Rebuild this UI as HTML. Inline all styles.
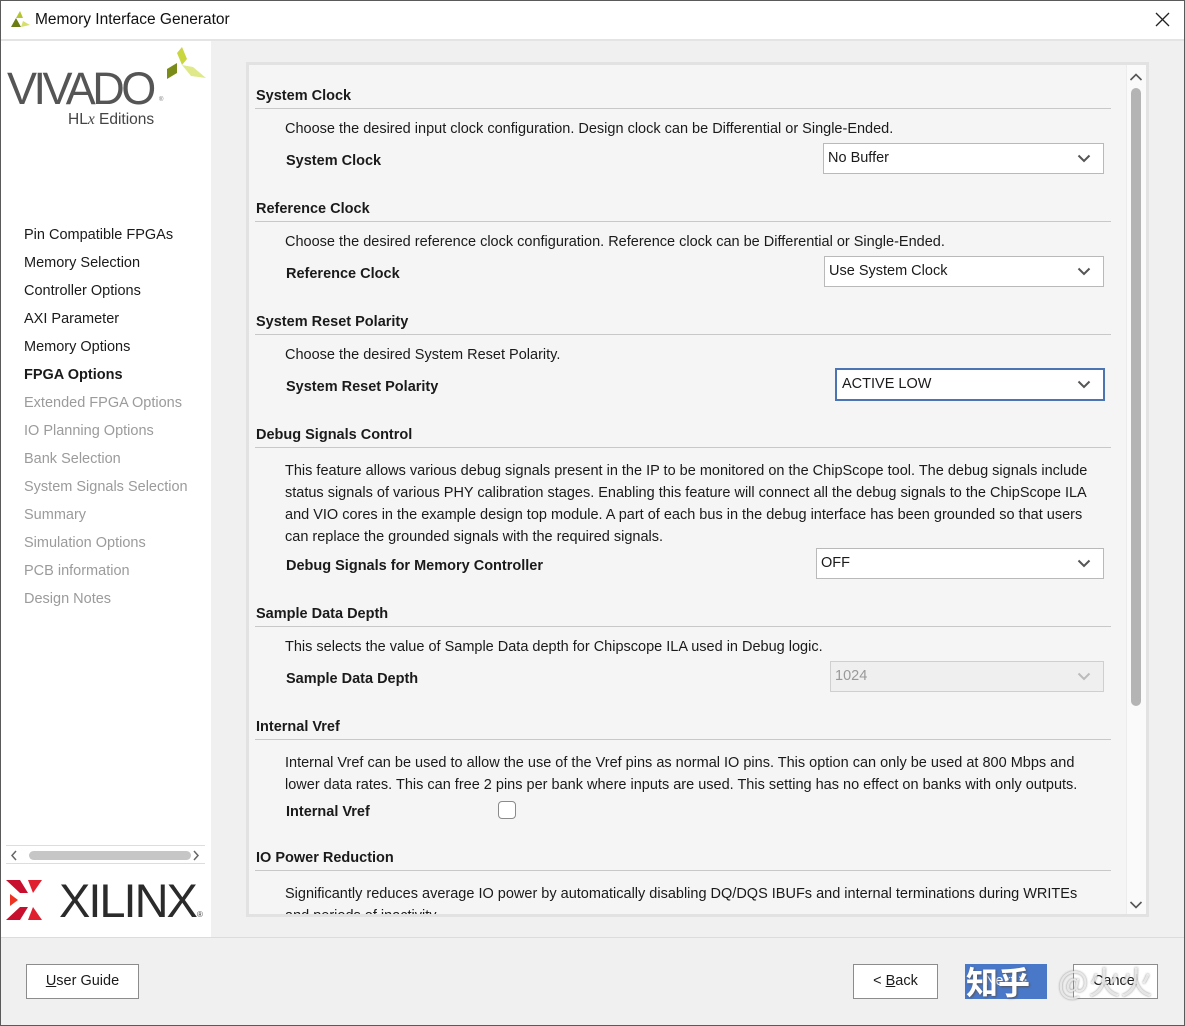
<!DOCTYPE html>
<html><head><meta charset="utf-8"><style>
*{margin:0;padding:0;box-sizing:border-box}
body{width:1185px;height:1026px;position:relative;overflow:hidden;background:#f0f0f0;font-family:"Liberation Sans",Arial,sans-serif;font-size:14.5px;color:#1a1a1a}
.a{position:absolute;white-space:nowrap}
.h{font-weight:bold;font-size:14.5px}
.rule{position:absolute;left:255px;width:856px;height:1px;background:#c8c8c8}
.dd{position:absolute;background:#fff;border:1px solid #b9b9b9;height:31px;padding-left:4px;line-height:29px;font-size:14.5px}
.dd svg{position:absolute;right:12px;top:10px}
.nav{position:absolute;left:24px;font-size:14.5px}
.dis{color:#9b9b9b}
.btn{position:absolute;height:35px;border:1px solid #8c8c8c;background:#fff;text-align:center;line-height:33px;font-size:14.5px}
</style></head><body>
<div class="a" style="left:0;top:0;width:1185px;height:1026px;border:1px solid #5a5a5a"></div>
<div class="a" style="left:1px;top:1px;width:1183px;height:38px;background:#fff"></div>
<svg class="a" style="left:9px;top:9px" width="22" height="20"><polygon points="2,18 7,9 12,18" fill="#6b7d12"/><polygon points="7,9 11,2 14,9" fill="#b5c531"/><polygon points="12,18 14,12 21,16" fill="#d7e06a"/></svg>
<div class="a" style="left:35px;top:11px;font-size:15.5px;color:#111">Memory Interface Generator</div>
<svg class="a" style="left:1155px;top:12px" width="15" height="15"><path d="M1 1L14 14M14 1L1 14" stroke="#222" stroke-width="1.3"/></svg>
<div class="a" style="left:1px;top:39px;width:1183px;height:2px;background:#e4e4e4"></div>
<div class="a" style="left:1px;top:41px;width:210px;height:896px;background:#fff"></div>
<div class="a" style="left:7px;top:64px;font-size:45px;color:#555;letter-spacing:-3.5px;line-height:50px">VIVADO</div>
<div class="a" style="left:159px;top:97px;font-size:6px;color:#777">®</div>
<div class="a" style="left:68px;top:111px;font-size:15.5px;color:#444">HL<i style="font-family:'Liberation Serif',serif">x</i> Editions</div>
<svg class="a" style="left:163px;top:45px" width="44" height="40"><polygon points="14,8 19,2 24,14 19,20" fill="#c9d640"/><polygon points="4,24 14,18 14,28 4,34" fill="#7b8c18"/><polygon points="19,20 30,22 43,33 28,31" fill="#e0e98a"/></svg>
<div class="nav" style="top:227px">Pin Compatible FPGAs</div>
<div class="nav" style="top:255px">Memory Selection</div>
<div class="nav" style="top:283px">Controller Options</div>
<div class="nav" style="top:311px">AXI Parameter</div>
<div class="nav" style="top:339px">Memory Options</div>
<div class="nav" style="top:367px;font-weight:bold">FPGA Options</div>
<div class="nav dis" style="top:395px">Extended FPGA Options</div>
<div class="nav dis" style="top:423px">IO Planning Options</div>
<div class="nav dis" style="top:451px">Bank Selection</div>
<div class="nav dis" style="top:479px">System Signals Selection</div>
<div class="nav dis" style="top:507px">Summary</div>
<div class="nav dis" style="top:535px">Simulation Options</div>
<div class="nav dis" style="top:563px">PCB information</div>
<div class="nav dis" style="top:591px">Design Notes</div>
<div class="a" style="left:6px;top:845px;width:199px;height:1px;background:#ddd"></div>
<div class="a" style="left:6px;top:863px;width:199px;height:1px;background:#ddd"></div>
<svg class="a" style="left:10px;top:849px" width="196" height="13"><path d="M6 2L2 6.5L6 11" stroke="#666" stroke-width="1.5" fill="none"/><rect x="19" y="2" width="162" height="9" rx="4.5" fill="#c6c6c6"/><path d="M184 2L188 6.5L184 11" stroke="#666" stroke-width="1.5" fill="none"/></svg>
<svg class="a" style="left:6px;top:880px" width="38" height="40"><polygon points="0,0 14,0 22,13 14,13" fill="#c8102e"/><polygon points="0,40 14,40 22,27 14,27" fill="#c8102e"/><polygon points="4,14 12,20 4,26" fill="#e32"/><polygon points="22,0 36,0 27,13" fill="#e0202f"/><polygon points="22,40 36,40 27,27" fill="#e0202f"/></svg>
<div class="a" style="left:59px;top:874px;font-size:47px;color:#2b2b2b;line-height:54px;letter-spacing:-2px">XILINX</div>
<div class="a" style="left:197px;top:910px;font-size:8px;color:#444">®</div>
<div class="a" style="left:246px;top:62px;width:903px;height:855px;border:3px solid #e2e2e2;background:#f5f5f5"></div>
<div class="a" style="left:1126px;top:65px;width:20px;height:849px;background:#fafafa;border-left:1px solid #ececec"></div>
<svg class="a" style="left:1129px;top:72px" width="14" height="10"><path d="M1.5 8L7 2.5L12.5 8" stroke="#555" stroke-width="1.6" fill="none"/></svg>
<div class="a" style="left:1131px;top:88px;width:10px;height:618px;background:#b4b4b4;border-radius:5px"></div>
<svg class="a" style="left:1129px;top:900px" width="14" height="10"><path d="M1.5 2L7 7.5L12.5 2" stroke="#555" stroke-width="1.6" fill="none"/></svg>

<div class="a h" style="left:256px;top:88px">System Clock</div><div class="rule" style="top:108px"></div>
<div class="a" style="left:285px;top:121px">Choose the desired input clock configuration. Design clock can be Differential or Single-Ended.</div>
<div class="a h" style="left:286px;top:153px">System Clock</div>
<div class="dd" style="left:823px;top:143px;width:281px">No Buffer<svg width="14" height="9"><path d="M1.5 1.5L7 7L12.5 1.5" stroke="#555" stroke-width="2" fill="none"/></svg></div>

<div class="a h" style="left:256px;top:201px">Reference Clock</div><div class="rule" style="top:221px"></div>
<div class="a" style="left:285px;top:234px">Choose the desired reference clock configuration. Reference clock can be Differential or Single-Ended.</div>
<div class="a h" style="left:286px;top:266px">Reference Clock</div>
<div class="dd" style="left:824px;top:256px;width:280px">Use System Clock<svg width="14" height="9"><path d="M1.5 1.5L7 7L12.5 1.5" stroke="#555" stroke-width="2" fill="none"/></svg></div>

<div class="a h" style="left:256px;top:314px">System Reset Polarity</div><div class="rule" style="top:334px"></div>
<div class="a" style="left:285px;top:347px">Choose the desired System Reset Polarity.</div>
<div class="a h" style="left:286px;top:379px">System Reset Polarity</div>
<div class="dd" style="left:835px;top:368px;width:270px;height:33px;border:2px solid #4a74b4;padding-left:5px">ACTIVE LOW<svg width="14" height="9"><path d="M1.5 1.5L7 7L12.5 1.5" stroke="#555" stroke-width="2" fill="none"/></svg></div>

<div class="a h" style="left:256px;top:427px">Debug Signals Control</div><div class="rule" style="top:447px"></div>
<div class="a" style="left:285px;top:460px;line-height:22px">This feature allows various debug signals present in the IP to be monitored on the ChipScope tool. The debug signals include<br>status signals of various PHY calibration stages. Enabling this feature will connect all the debug signals to the ChipScope ILA<br>and VIO cores in the example design top module. A part of each bus in the debug interface has been grounded so that users<br>can replace the grounded signals with the required signals.</div>
<div class="a h" style="left:286px;top:558px">Debug Signals for Memory Controller</div>
<div class="dd" style="left:816px;top:548px;width:288px">OFF<svg width="14" height="9"><path d="M1.5 1.5L7 7L12.5 1.5" stroke="#555" stroke-width="2" fill="none"/></svg></div>

<div class="a h" style="left:256px;top:606px">Sample Data Depth</div><div class="rule" style="top:626px"></div>
<div class="a" style="left:285px;top:639px">This selects the value of Sample Data depth for Chipscope ILA used in Debug logic.</div>
<div class="a h" style="left:286px;top:671px">Sample Data Depth</div>
<div class="dd" style="left:830px;top:661px;width:274px;background:#efefef;color:#999;border-color:#cfcfcf">1024<svg width="14" height="9"><path d="M1.5 1.5L7 7L12.5 1.5" stroke="#bbb" stroke-width="2" fill="none"/></svg></div>

<div class="a h" style="left:256px;top:719px">Internal Vref</div><div class="rule" style="top:739px"></div>
<div class="a" style="left:285px;top:752px;line-height:22px">Internal Vref can be used to allow the use of the Vref pins as normal IO pins. This option can only be used at 800 Mbps and<br>lower data rates. This can free 2 pins per bank where inputs are used. This setting has no effect on banks with only outputs.</div>
<div class="a h" style="left:286px;top:804px">Internal Vref</div>
<div class="a" style="left:498px;top:801px;width:18px;height:18px;border:1.5px solid #8a8a8a;border-radius:4px;background:#fff"></div>

<div class="a h" style="left:256px;top:850px">IO Power Reduction</div><div class="rule" style="top:870px"></div>
<div class="a" style="left:0;top:0;width:1185px;height:914px;overflow:hidden"><div class="a" style="left:285px;top:883px;line-height:22px">Significantly reduces average IO power by automatically disabling DQ/DQS IBUFs and internal terminations during WRITEs<br>and periods of inactivity.</div></div>

<div class="a" style="left:1px;top:937px;width:1183px;height:1px;background:#dcdcdc"></div>
<div class="btn" style="left:26px;top:964px;width:113px"><u>U</u>ser Guide</div>
<div class="btn" style="left:853px;top:964px;width:85px">&lt; <u>B</u>ack</div>
<div class="btn" style="left:965px;top:964px;width:82px;background:#4a78c8;border-color:#4a78c8;color:#fff">Next &gt;</div>
<div class="a" style="left:966px;top:958px;font-family:'Noto Sans CJK SC',sans-serif;font-size:32px;color:#fff;font-weight:bold;text-shadow:1px 1px 2px #555">知乎</div>
<div class="btn" style="left:1073px;top:964px;width:85px">Cancel</div>
<div class="a" style="left:1058px;top:958px;font-family:'Noto Sans CJK SC',sans-serif;font-size:32px;color:rgba(255,255,255,0.7);text-shadow:0 0 2px #888">@火火</div>
</body></html>
